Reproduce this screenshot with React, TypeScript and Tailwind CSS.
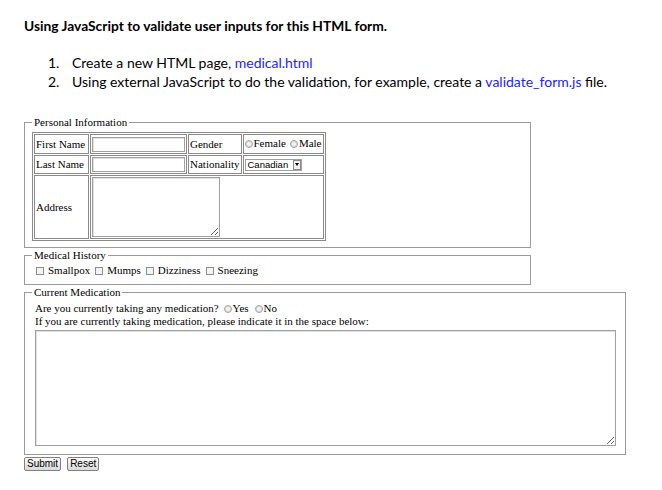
import React from "react";

function Radio() {
  return (
    <span className="inline-block w-[8px] h-[8px] rounded-full border border-[#a3a3a3] bg-[#f2f2f2] shadow-[inset_0_0_0_1px_#dadada] align-middle" />
  );
}

function Check() {
  return (
    <span className="inline-block w-[8px] h-[8px] border border-[#8c8c8c] bg-[#f4f4f4] align-middle" />
  );
}

const cell = "border border-[#8a8a8a] px-[1px] py-0 whitespace-nowrap text-left";

export default function App() {
  return (
    <div className="w-[662px] h-[490px] bg-white overflow-hidden pl-[24px] pt-[17px] text-black">
      <h1 className="font-['Lato',sans-serif] font-bold text-[13.8px] leading-[18px]">
        Using JavaScript to validate user inputs for this HTML form.
      </h1>
      <ol className="mt-[18px] pl-[24px] font-['Lato',sans-serif] text-[14px] leading-[19px]">
        <li className="flex">
          <span className="w-[24px]">1.</span>
          <span>
            Create a new HTML page, <span className="text-[#2323ff]">medical.html</span>
          </span>
        </li>
        <li className="flex">
          <span className="w-[24px]">2.</span>
          <span>
            Using external JavaScript to do the validation, for example, create a{" "}
            <span className="text-[#2323ff]">validate_form.js</span> file.
          </span>
        </li>
      </ol>

      <form className="mt-[24px] font-['Liberation_Serif',serif] text-[11px] leading-[13px]">
        <fieldset className="w-[507px] border border-[#9a9a9a] pl-[7px] pr-[7px] pt-[3px] pb-[6px]">
          <legend className="px-[2px] leading-[14px]">Personal Information</legend>
          <table className="border-separate border-spacing-[1px] border border-[#8a8a8a]">
            <tbody>
              <tr className="h-[20px]">
                <td className={cell + " w-[55px]"}>First Name</td>
                <td className={cell + " w-[95px]"}>
                  <input
                    type="text"
                    className="block w-[93px] h-[15px] border border-[#a0a0a0] shadow-[inset_1px_1px_0_#e0e0e0] bg-white outline-none"
                  />
                </td>
                <td className={cell + " w-[53px]"}>Gender</td>
                <td className={cell + " w-[81px]"}>
                  <span className="inline-flex items-center gap-[1px]">
                    <Radio />
                    <span>Female</span>
                    <span className="w-[2px]" />
                    <Radio />
                    <span>Male</span>
                  </span>
                </td>
              </tr>
              <tr className="h-[19px]">
                <td className={cell}>Last Name</td>
                <td className={cell}>
                  <input
                    type="text"
                    className="block w-[93px] h-[15px] border border-[#a0a0a0] shadow-[inset_1px_1px_0_#e0e0e0] bg-white outline-none"
                  />
                </td>
                <td className={cell}>Nationality</td>
                <td className={cell}>
                  <span className="flex items-center w-[57px] h-[12px] border border-[#a0a0a0] bg-white font-['Liberation_Sans',sans-serif] text-[9.5px] leading-none">
                    <span className="flex-1 pl-[2px]">Canadian</span>
                    <span className="flex items-center justify-center w-[8px] h-[10px] border border-[#8a8a8a] bg-[#f0f0f0]">
                      <span className="w-0 h-0 border-l-[2.5px] border-r-[2.5px] border-t-[3px] border-l-transparent border-r-transparent border-t-black" />
                    </span>
                  </span>
                </td>
              </tr>
              <tr className="h-[64px]">
                <td className={cell}>Address</td>
                <td className={cell} colSpan={3}>
                  <textarea className="block w-[128px] h-[60px] border border-[#a0a0a0] shadow-[inset_1px_1px_0_#e0e0e0] bg-white outline-none" />
                </td>
              </tr>
            </tbody>
          </table>
        </fieldset>

        <fieldset className="w-[507px] border border-[#9a9a9a] pl-[7px] pr-[7px] pt-[2px] pb-[7px]">
          <legend className="px-[2px] leading-[14px]">Medical History</legend>
          <div className="pl-[4px] flex items-center h-[13px]">
            <Check />
            <span className="ml-[4px]">Smallpox</span>
            <span className="ml-[5px]"><Check /></span>
            <span className="ml-[4px]">Mumps</span>
            <span className="ml-[5px]"><Check /></span>
            <span className="ml-[4px]">Dizziness</span>
            <span className="ml-[5px]"><Check /></span>
            <span className="ml-[4px]">Sneezing</span>
          </div>
        </fieldset>

        <fieldset className="w-[602px] border border-[#9a9a9a] pl-[7px] pr-[7px] pt-[3px] pb-[8px]">
          <legend className="px-[2px] leading-[14px]">Current Medication</legend>
          <div className="pl-[3px]">
            <div className="flex items-center h-[13px]">
              <span>Are you currently taking any medication?</span>
              <span className="ml-[5px]"><Radio /></span>
              <span className="ml-[1px]">Yes</span>
              <span className="ml-[6px]"><Radio /></span>
              <span className="ml-[1px]">No</span>
            </div>
            <div className="h-[13px]">
              If you are currently taking medication, please indicate it in the space below:
            </div>
            <textarea className="block mt-[2px] w-[581px] h-[116px] border border-[#a0a0a0] shadow-[inset_1px_1px_0_#e0e0e0] bg-white outline-none" />
          </div>
        </fieldset>

        <div className="mt-[2px] flex gap-[6px]">
          <button
            type="button"
            className="h-[14px] px-[2px] border border-[#808080] rounded-[2px] bg-gradient-to-b from-[#fbfbfb] to-[#dadada] font-['Liberation_Sans',sans-serif] text-[10px] leading-none"
          >
            Submit
          </button>
          <button
            type="button"
            className="h-[14px] px-[2px] border border-[#808080] rounded-[2px] bg-gradient-to-b from-[#fbfbfb] to-[#dadada] font-['Liberation_Sans',sans-serif] text-[10px] leading-none"
          >
            Reset
          </button>
        </div>
      </form>
    </div>
  );
}
